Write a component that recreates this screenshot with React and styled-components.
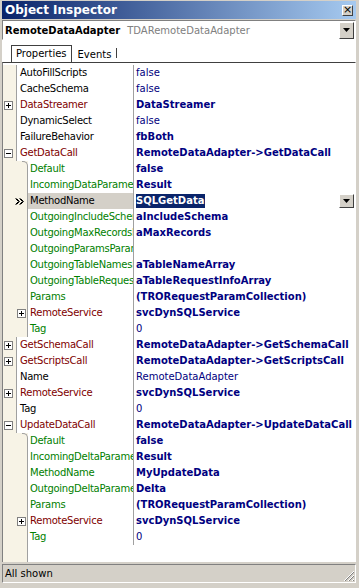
import React from 'react'
import styled, { createGlobalStyle } from 'styled-components'

const GlobalStyle = createGlobalStyle`
  html, body {
    margin: 0;
    padding: 0;
    background: #D4D0C8;
  }
  body {
    font-family: "DejaVu Sans", Tahoma, sans-serif;
  }
`

const rows = [
  { name: 'AutoFillScripts', value: 'false' },
  { name: 'CacheSchema', value: 'false' },
  { name: 'DataStreamer', value: 'DataStreamer', kind: 'ref', bold: true, expander: 'plus' },
  { name: 'DynamicSelect', value: 'false' },
  { name: 'FailureBehavior', value: 'fbBoth', bold: true },
  { name: 'GetDataCall', value: 'RemoteDataAdapter->GetDataCall', kind: 'ref', bold: true, expander: 'minus' },
  { name: 'Default', value: 'false', kind: 'sub', bold: true, level: 1, first: true },
  { name: 'IncomingDataParameter', value: 'Result', kind: 'sub', bold: true, level: 1 },
  { name: 'MethodName', value: 'SQLGetData', level: 1, selected: true },
  { name: 'OutgoingIncludeSchemaParameter', value: 'aIncludeSchema', kind: 'sub', bold: true, level: 1 },
  { name: 'OutgoingMaxRecordsParameter', value: 'aMaxRecords', kind: 'sub', bold: true, level: 1 },
  { name: 'OutgoingParamsParameter', value: '', kind: 'sub', level: 1 },
  { name: 'OutgoingTableNamesParameter', value: 'aTableNameArray', kind: 'sub', bold: true, level: 1 },
  { name: 'OutgoingTableRequestInfo', value: 'aTableRequestInfoArray', kind: 'sub', bold: true, level: 1 },
  { name: 'Params', value: '(TRORequestParamCollection)', kind: 'sub', bold: true, level: 1 },
  { name: 'RemoteService', value: 'svcDynSQLService', kind: 'ref', bold: true, level: 1, expander: 'plus' },
  { name: 'Tag', value: '0', kind: 'sub', level: 1 },
  { name: 'GetSchemaCall', value: 'RemoteDataAdapter->GetSchemaCall', kind: 'ref', bold: true, expander: 'plus' },
  { name: 'GetScriptsCall', value: 'RemoteDataAdapter->GetScriptsCall', kind: 'ref', bold: true, expander: 'plus' },
  { name: 'Name', value: 'RemoteDataAdapter' },
  { name: 'RemoteService', value: 'svcDynSQLService', kind: 'ref', bold: true, expander: 'plus' },
  { name: 'Tag', value: '0' },
  { name: 'UpdateDataCall', value: 'RemoteDataAdapter->UpdateDataCall', kind: 'ref', bold: true, expander: 'minus' },
  { name: 'Default', value: 'false', kind: 'sub', bold: true, level: 1, first: true },
  { name: 'IncomingDeltaParameter', value: 'Result', kind: 'sub', bold: true, level: 1 },
  { name: 'MethodName', value: 'MyUpdateData', kind: 'sub', bold: true, level: 1 },
  { name: 'OutgoingDeltaParameter', value: 'Delta', kind: 'sub', bold: true, level: 1 },
  { name: 'Params', value: '(TRORequestParamCollection)', kind: 'sub', bold: true, level: 1 },
  { name: 'RemoteService', value: 'svcDynSQLService', kind: 'ref', bold: true, level: 1, expander: 'plus' },
  { name: 'Tag', value: '0', kind: 'sub', level: 1 },
]

const nameColors = { ref: '#800000', sub: '#008000', plain: '#000000' }

const Expander = ({ type }) => (
  <svg width="9" height="9" viewBox="0 0 9 9">
    <rect x="0.5" y="0.5" width="8" height="8" fill="#fff" stroke="#808080" />
    <line x1="2" y1="4.5" x2="7" y2="4.5" stroke="#000" />
    {type === 'plus' && <line x1="4.5" y1="2" x2="4.5" y2="7" stroke="#000" />}
  </svg>
)

const Chevrons = () => (
  <svg width="9" height="7" viewBox="0 0 9 7">
    <path d="M0.5 0.5 L3.5 3.5 L0.5 6.5 M1.5 0.5 L4.5 3.5 L1.5 6.5" stroke="#000" fill="none" />
    <path d="M4.5 0.5 L7.5 3.5 L4.5 6.5 M5.5 0.5 L8.5 3.5 L5.5 6.5" stroke="#000" fill="none" />
  </svg>
)

const DownArrow = () => (
  <svg width="7" height="4" viewBox="0 0 7 4">
    <path d="M0 0 H7 L3.5 4 Z" fill="#000" />
  </svg>
)

const App = () => {
  return (
    <Window>
      <GlobalStyle />
      <TitleBar>
        <span>Object Inspector</span>
        <CloseButton>×</CloseButton>
      </TitleBar>
      <Combo>
        <ComboText>
          <b>RemoteDataAdapter</b>
          <TypeName>TDARemoteDataAdapter</TypeName>
        </ComboText>
        <DropButton $h={17}><DownArrow /></DropButton>
      </Combo>
      <TabStrip>
        <Tab $active>Properties</Tab>
        <Tab>Events</Tab>
        <TabSep />
      </TabStrip>
      <Grid>
        {rows.map((r, i) => {
          const level = r.level || 0
          return (
            <Row key={i}>
              <NamePart>
                <Gutter $level={level} $first={r.first}>
                  {r.expander && (
                    <ExpanderBox $level={level}><Expander type={r.expander} /></ExpanderBox>
                  )}
                  {r.selected && <Pointer><Chevrons /></Pointer>}
                </Gutter>
                <NameText
                  $level={level}
                  $color={r.selected ? '#000' : nameColors[r.kind || 'plain']}
                  $selected={r.selected}
                >
                  {r.name}
                </NameText>
              </NamePart>
              {r.selected ? (
                <ValueEdit>
                  <Selection>{r.value}</Selection>
                  <DropButton $h={14}><DownArrow /></DropButton>
                </ValueEdit>
              ) : (
                <ValueText $bold={r.bold}>{r.value}</ValueText>
              )}
            </Row>
          )
        })}
        <Filler>
          <Gutter $level={1} />
        </Filler>
      </Grid>
      <StatusBar>
        <StatusPanel>All shown</StatusPanel>
        <Grip>
          <svg width="12" height="12" viewBox="0 0 12 12">
            <path d="M11 1 L1 11 M11 5 L5 11 M11 9 L9 11" stroke="#fff" />
            <path d="M11 2 L2 11 M11 6 L6 11 M11 10 L10 11" stroke="#808080" />
          </svg>
        </Grip>
      </StatusBar>
    </Window>
  )
}

const Window = styled.div`
  width: 359px;
  height: 588px;
  box-sizing: border-box;
  padding: 1px 3px 5px 2px;
  background: #D4D0C8;
  display: flex;
  flex-direction: column;
  font-size: 10px;
  overflow: hidden;
`

const TitleBar = styled.div`
  height: 18px;
  flex: none;
  display: flex;
  align-items: center;
  justify-content: space-between;
  padding: 0 3px 0 3px;
  background: linear-gradient(to right, #0A246A, #A6CAF0);
  color: #fff;
  font-weight: bold;
  font-size: 12px;
`

const CloseButton = styled.div`
  width: 11px;
  height: 11px;
  box-sizing: border-box;
  background: #D4D0C8;
  border: 1px solid;
  border-color: #fff #404040 #404040 #fff;
  color: #000;
  font-size: 11px;
  line-height: 8px;
  text-align: center;
  font-weight: normal;
`

const Combo = styled.div`
  flex: none;
  height: 20px;
  margin-top: 1px;
  box-sizing: border-box;
  background: #fff;
  border: 1px solid;
  border-color: #808080 #fff #fff #808080;
  display: flex;
  align-items: center;
  padding: 0 1px 0 2px;
`

const ComboText = styled.div`
  flex: 1;
  color: #000;
  font-size: 10px;
  white-space: nowrap;
  overflow: hidden;
  b {
    font-weight: bold;
  }
`

const TypeName = styled.span`
  color: #808080;
  margin-left: 7px;
`

const DropButton = styled.div`
  flex: none;
  width: 15px;
  height: ${({ $h }) => $h}px;
  box-sizing: border-box;
  background: #D4D0C8;
  border: 1px solid;
  border-color: #fff #404040 #404040 #fff;
  display: flex;
  align-items: center;
  justify-content: center;
`

const TabStrip = styled.div`
  flex: none;
  height: 22px;
  box-sizing: border-box;
  background: #fff;
  display: flex;
  align-items: flex-end;
  padding-left: 9px;
`

const Tab = styled.div`
  height: ${({ $active }) => ($active ? 17 : 16)}px;
  box-sizing: border-box;
  padding: 0 ${({ $active }) => ($active ? 4 : 5)}px;
  line-height: 15px;
  font-size: 10px;
  color: #000;
  border: 1px solid ${({ $active }) => ($active ? '#404040' : 'transparent')};
  border-bottom: none;
  background: #fff;
`

const TabSep = styled.div`
  width: 1px;
  height: 10px;
  margin: 0 0 4px -1px;
  background: #404040;
`

const Grid = styled.div`
  flex: 1;
  min-height: 0;
  display: flex;
  flex-direction: column;
  background: #fff;
  border-top: 1px solid #404040;
  border-left: 1px solid #808080;
  border-right: 1px solid #fff;
  padding-top: 2px;
`

const Row = styled.div`
  display: flex;
  height: 16px;
  line-height: 16px;
  flex: none;
`

const NamePart = styled.div`
  width: 131px;
  flex: none;
  box-sizing: border-box;
  display: flex;
  border-right: 1px solid #A0A0A0;
`

const Gutter = styled.div`
  position: relative;
  width: ${({ $level }) => ($level ? 25 : 14)}px;
  flex: none;
  box-sizing: border-box;
  display: flex;
  align-items: center;
  background:
    linear-gradient(#A0A0A0, #A0A0A0) no-repeat right 0 top ${({ $first }) => ($first ? 5 : 0)}px / 1px 100%,
    #F7F3E6;
  &::before {
    content: "";
    display: ${({ $first }) => ($first ? 'block' : 'none')};
    position: absolute;
    top: 0;
    right: 0;
    width: 5px;
    height: 5px;
    border-top: 1px solid #A0A0A0;
    border-right: 1px solid #A0A0A0;
    border-top-right-radius: 5px;
  }
`

const ExpanderBox = styled.div`
  display: flex;
  margin-left: ${({ $level }) => ($level ? 14 : 1)}px;
`

const Pointer = styled.div`
  display: flex;
  margin-left: 12px;
`

const NameText = styled.div`
  flex: 1;
  min-width: 0;
  overflow: hidden;
  white-space: nowrap;
  padding-left: ${({ $level }) => ($level ? 2 : 3)}px;
  color: ${({ $color }) => $color};
  background: ${({ $selected }) => ($selected ? '#D4D0C8' : 'transparent')};
  letter-spacing: -0.25px;
`

const ValueText = styled.div`
  flex: 1;
  min-width: 0;
  overflow: hidden;
  white-space: nowrap;
  padding-left: 2px;
  color: #000080;
  font-weight: ${({ $bold }) => ($bold ? 'bold' : 'normal')};
`

const ValueEdit = styled.div`
  flex: 1;
  display: flex;
  align-items: center;
  justify-content: space-between;
  padding: 0 1px 0 2px;
`

const Selection = styled.span`
  background: #0A246A;
  color: #fff;
  font-weight: bold;
  line-height: 14px;
  padding-right: 1px;
`

const Filler = styled.div`
  flex: 1;
  display: flex;
`

const StatusBar = styled.div`
  flex: none;
  height: 21px;
  box-sizing: border-box;
  display: flex;
  align-items: stretch;
  padding: 2px 0 0 0;
  position: relative;
`

const StatusPanel = styled.div`
  flex: 1;
  box-sizing: border-box;
  border: 1px solid;
  border-color: #808080 #fff #fff #808080;
  padding-left: 2px;
  line-height: 17px;
  color: #000;
  font-size: 10px;
`

const Grip = styled.div`
  position: absolute;
  right: 1px;
  bottom: 1px;
  display: flex;
`

export default App
